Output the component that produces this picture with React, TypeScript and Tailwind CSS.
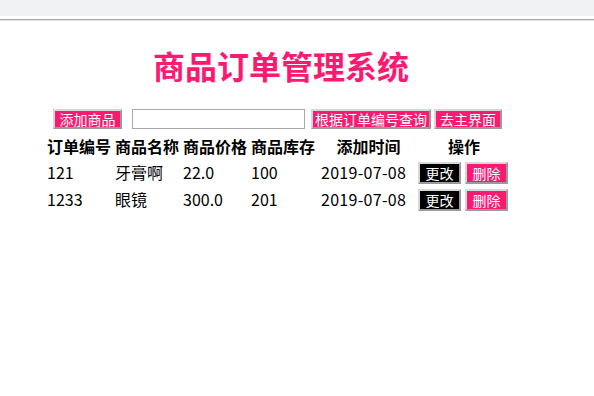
import React from "react";

const btnPink =
  "h-[20px] bg-[#fa1a72] text-white text-[14px] leading-[16px] border-2 border-t-[#d8d8d8] border-l-[#d8d8d8] border-r-[#9a9a9a] border-b-[#9a9a9a] whitespace-nowrap flex items-center justify-center";

const rows = [
  { id: "121", name: "牙膏啊", price: "22.0", stock: "100", date: "2019-07-08" },
  { id: "1233", name: "眼镜", price: "300.0", stock: "201", date: "2019-07-08" },
];

export default function App() {
  return (
    <div
      className="w-[594px] h-[396px] bg-white text-black overflow-hidden"
      style={{ fontFamily: '"Noto Sans CJK SC", "Noto Sans", sans-serif' }}
    >
      <div className="h-[16px] bg-[#f1f2f4]" />
      <div className="h-[3px]" />
      <div className="h-[1px] bg-[#a9a9a9]" />
      <div className="h-[1px] bg-[#e3e3e3]" />
      <div className="pr-[32px] pt-[24px] text-center">
        <h1 className="text-[32px] leading-[40px] font-bold text-[#fa1a72]">商品订单管理系统</h1>
      </div>
      <div className="mt-[24px] pl-[53px] flex items-center">
        <button className={btnPink + " w-[69px]"}>添加商品</button>
        <input className="ml-[10px] w-[173px] h-[20px] border border-[#a8a8a8] bg-white" />
        <button className={btnPink + " ml-[6px] w-[120px]"}>根据订单编号查询</button>
        <button className={btnPink + " ml-[3px] w-[68px]"}>去主界面</button>
      </div>
      <div className="pl-[47px] mt-[4px]">
        <div className="grid grid-cols-[68px_68px_68px_68px_99px_96px] items-center text-[16px]">
          <div className="font-bold h-[26px] leading-[26px]">订单编号</div>
          <div className="font-bold h-[26px] leading-[26px]">商品名称</div>
          <div className="font-bold h-[26px] leading-[26px]">商品价格</div>
          <div className="font-bold h-[26px] leading-[26px]">商品库存</div>
          <div className="font-bold h-[26px] leading-[26px] text-center">添加时间</div>
          <div className="font-bold h-[26px] leading-[26px] text-center pr-[4px]">操作</div>
          {rows.map((r) => (
            <React.Fragment key={r.id}>
              <div className="h-[27px] leading-[27px]">{r.id}</div>
              <div className="h-[27px] leading-[27px]">{r.name}</div>
              <div className="h-[27px] leading-[27px]">{r.price}</div>
              <div className="h-[27px] leading-[27px]">{r.stock}</div>
              <div className="h-[27px] leading-[27px] pl-[2px] tracking-[0.3px]">{r.date}</div>
              <div className="h-[27px] flex items-center gap-[4px]">
                <button className="h-[22px] w-[43px] bg-black text-white text-[14px] leading-[16px] border-2 border-t-[#d8d8d8] border-l-[#d8d8d8] border-r-[#9a9a9a] border-b-[#9a9a9a] flex items-center justify-center">更改</button>
                <button className="h-[22px] w-[43px] bg-[#fa1a72] text-white text-[14px] leading-[16px] border-2 border-t-[#d8d8d8] border-l-[#d8d8d8] border-r-[#9a9a9a] border-b-[#9a9a9a] flex items-center justify-center">删除</button>
              </div>
            </React.Fragment>
          ))}
        </div>
      </div>
    </div>
  );
}
